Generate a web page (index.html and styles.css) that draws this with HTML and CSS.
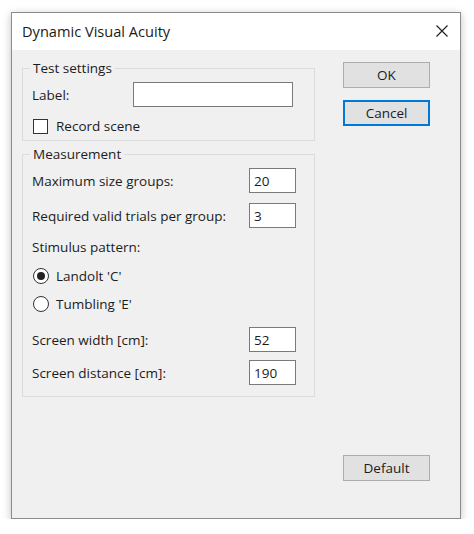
FILE: index.html
```html
<!DOCTYPE html>
<html>
<head>
<meta charset="utf-8">
<title>Dynamic Visual Acuity</title>
<link rel="stylesheet" href="styles.css">
</head>
<body>
<div class="window">
  <div class="titlebar">
    <span class="title">Dynamic Visual Acuity</span>
    <svg class="close" width="12" height="12" viewBox="0 0 12 12"><path d="M0.5 0.5 L11.5 11.5 M11.5 0.5 L0.5 11.5" stroke="#222" stroke-width="1.2" fill="none"/></svg>
  </div>
  <div class="content">
    <div class="left">
      <div class="group g1">
        <span class="caption">Test settings</span>
        <div class="row field-row">
          <span class="lbl lbl-short">Label:</span>
          <span class="input input-wide"></span>
        </div>
        <div class="row check-row">
          <span class="checkbox"></span>
          <span>Record scene</span>
        </div>
      </div>
      <div class="group g2">
        <span class="caption">Measurement</span>
        <div class="row field-row">
          <span class="lbl lbl-long">Maximum size groups:</span>
          <span class="input input-num">20</span>
        </div>
        <div class="row field-row r-gap10">
          <span class="lbl lbl-long">Required valid trials per group:</span>
          <span class="input input-num">3</span>
        </div>
        <div class="row text-row r-gap9">Stimulus pattern:</div>
        <div class="row check-row r-gap9">
          <span class="radio on"></span>
          <span>Landolt 'C'</span>
        </div>
        <div class="row check-row r-gap8">
          <span class="radio"></span>
          <span>Tumbling 'E'</span>
        </div>
        <div class="row field-row r-gap13">
          <span class="lbl lbl-long">Screen width [cm]:</span>
          <span class="input input-num">52</span>
        </div>
        <div class="row field-row r-gap8">
          <span class="lbl lbl-long">Screen distance [cm]:</span>
          <span class="input input-num">190</span>
        </div>
      </div>
    </div>
    <div class="right">
      <button class="btn">OK</button>
      <button class="btn btn-focus">Cancel</button>
      <button class="btn btn-bottom">Default</button>
    </div>
  </div>
</div>
</body>
</html>
```
FILE: styles.css
```css
html, body {
  margin: 0;
  padding: 0;
  background: #ffffff;
}
body {
  font-family: "Open Sans", "Noto Sans", sans-serif;
  font-size: 13.5px;
  color: #1c1c1c;
}
.window {
  margin: 12px 0 0 11px;
  width: 450px;
  height: 507px;
  box-sizing: border-box;
  border: 1px solid #8c8c8c;
  background: #f0f0f0;
  box-shadow: 0 2px 8px rgba(0,0,0,0.25);
  display: flex;
  flex-direction: column;
}
.titlebar {
  height: 37px;
  box-sizing: border-box;
  background: #ffffff;
  display: flex;
  align-items: center;
  justify-content: space-between;
  padding: 0 12px 2px 10px;
  flex: none;
}
.title {
  font-size: 14.6px;
  color: #1a1a1a;
}
.close {
  display: block;
}
.content {
  flex: 1;
  display: flex;
  padding: 0 30px 37px 10px;
}
.left {
  width: 294px;
  padding-top: 18px;
  display: flex;
  flex-direction: column;
  gap: 13px;
}
.group {
  position: relative;
  border: 1px solid #dcdcdc;
  padding: 13px 0 4px 9px;
}
.g2 {
  padding-bottom: 11px;
}
.caption {
  position: absolute;
  top: -10px;
  left: 7px;
  padding: 0 3px;
  background: #f0f0f0;
  line-height: 18px;
}
.row {
  display: flex;
  align-items: center;
}
.field-row { height: 25px; }
.check-row { height: 20px; margin-top: 9px; }
.text-row { height: 20px; }
.r-gap8 { margin-top: 8px; }
.r-gap9 { margin-top: 9px; }
.r-gap10 { margin-top: 10px; }
.r-gap13 { margin-top: 13px; }
.lbl-short { width: 101px; }
.lbl-long { width: 217px; }
.input {
  box-sizing: border-box;
  height: 25px;
  background: #fff;
  border: 1px solid #7a7a7a;
  padding-left: 4px;
  display: flex;
  align-items: center;
}
.input-wide { width: 160px; }
.input-num { width: 47px; }
.checkbox {
  box-sizing: border-box;
  width: 15px;
  height: 15px;
  border: 1px solid #333;
  background: #fff;
  margin: 0 8px 0 1px;
}
.radio {
  box-sizing: border-box;
  width: 16px;
  height: 16px;
  border: 1px solid #333;
  border-radius: 50%;
  background: #fff;
  margin: 0 7px 0 1px;
  position: relative;
}
.radio.on::after {
  content: "";
  position: absolute;
  left: 3px;
  top: 3px;
  width: 8px;
  height: 8px;
  border-radius: 50%;
  background: #222;
}
.right {
  flex: 1;
  margin-left: 28px;
  padding-top: 12px;
  display: flex;
  flex-direction: column;
  gap: 12px;
}
.btn {
  box-sizing: border-box;
  width: 87px;
  height: 26px;
  background: #e1e1e1;
  border: 1px solid #adadad;
  font-family: inherit;
  font-size: 13.5px;
  color: #1c1c1c;
  padding: 0;
  margin: 0;
}
.btn-focus {
  border: 2px solid #0078d7;
}
.btn-bottom {
  margin-top: auto;
}
```
